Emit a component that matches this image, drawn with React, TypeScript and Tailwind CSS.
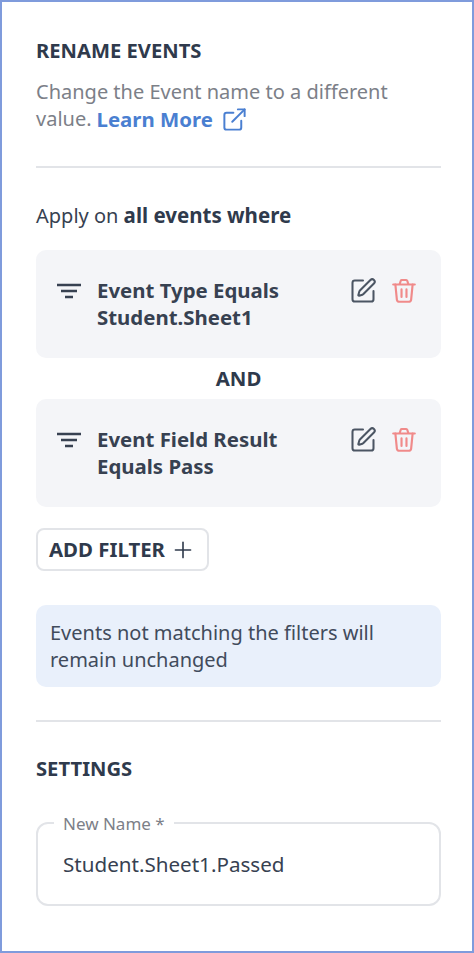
import { ExternalLink, Plus, SquarePen } from "lucide-react";

const FilterIcon = () => (
    <svg width="26" height="26" viewBox="0 0 26 26" fill="none" stroke="#374151" strokeWidth="2.4" className="mt-[1px] shrink-0">
        <path d="M1 7h24M5 13h16M9 19h8" />
    </svg>
);

const TrashIcon = () => (
    <svg width="26" height="28" viewBox="0 0 24 26" fill="none" stroke="#f08a8a" strokeWidth="2" strokeLinecap="round" strokeLinejoin="round">
        <path d="M2 7h20" />
        <path d="M8 6.5 9 3.5a1 1 0 0 1 1-.7h4a1 1 0 0 1 1 .7l1 3" />
        <path d="M4 7l1.4 14.2A2.2 2.2 0 0 0 7.6 23h8.8a2.2 2.2 0 0 0 2.2-1.8L20 7" />
        <path d="M9.7 11.5v7M14.3 11.5v7" />
    </svg>
);

function FilterCard({ lines }: { lines: string[] }) {
    return (
        <div className="flex h-[108px] rounded-[10px] bg-[#f4f5f8] pl-[20px] pr-[24px] pt-[27px]">
            <FilterIcon />
            <div className="ml-[15px] flex-1 text-[20.4px] font-bold leading-[27px] text-[#374151]">
                {lines.map((l) => (
                    <div key={l}>{l}</div>
                ))}
            </div>
            <div className="flex gap-[14px]">
                <SquarePen size={28} strokeWidth={1.75} className="text-[#4b5563]" />
                <TrashIcon />
            </div>
        </div>
    );
}

export default function App() {
    return (
        <div className="h-[953px] w-[474px] overflow-hidden border-2 border-[#7f9bdc] bg-white pl-[34px] pr-[31px] pt-[34px] font-['Noto_Sans',sans-serif] text-[#374151]">
            <h2 className="text-[20.2px] font-bold leading-[28px] text-[#2f3a4c]">RENAME EVENTS</h2>
            <div className="mt-[14px] text-[20px] leading-[28px] text-[#7c8088]">
                <div className="h-[27px]">Change the Event name to a different</div>
                <div className="flex h-[28px] items-center">
                    value.
                    <span className="ml-[5px] text-[20.4px] font-bold text-[#4a7fd1]">Learn More</span>
                    <ExternalLink size={27} strokeWidth={1.75} className="ml-[8px] text-[#4a7fd1]" />
                </div>
            </div>

            <div className="mt-[33px] h-[2px] bg-[#e2e4e8]" />

            <p className="mt-[33px] text-[20px] leading-[28px]">
                Apply on <span className="text-[20.5px] font-bold text-[#2f3a4c]">all events where</span>
            </p>

            <div className="mt-[20px]">
                <FilterCard lines={["Event Type Equals", "Student.Sheet1"]} />
            </div>
            <div className="flex h-[41px] items-center justify-center text-[20.4px] font-bold text-[#2f3a4c]">AND</div>
            <FilterCard lines={["Event Field Result", "Equals Pass"]} />

            <div className="mt-[21px] flex h-[43px] w-[173px] items-center rounded-[8px] border-2 border-[#e2e4e8] pl-[11px] text-[20.4px] font-bold text-[#2f3a4c]">
                ADD FILTER
                <Plus size={26} strokeWidth={1.5} className="ml-[5px]" />
            </div>

            <div className="mt-[34px] h-[82px] rounded-[10px] bg-[#e9f0fb] px-[14px] pt-[14px] text-[20px] leading-[27px] text-[#414b5c]">
                Events not matching the filters will remain unchanged
            </div>

            <div className="mt-[33px] h-[2px] bg-[#e2e4e8]" />

            <h2 className="mt-[32px] text-[20.2px] font-bold leading-[28px] text-[#2f3a4c]">SETTINGS</h2>

            <div className="relative mt-[40px] h-[84px] rounded-[12px] border-2 border-[#e2e4e8] pl-[25px] pt-[26px] text-[20.6px] leading-[28px]">
                <span className="absolute left-[16px] top-[-11px] bg-white px-[9px] text-[17px] leading-[22px] text-[#7c8088]">New Name *</span>
                Student.Sheet1.Passed
            </div>
        </div>
    );
}
